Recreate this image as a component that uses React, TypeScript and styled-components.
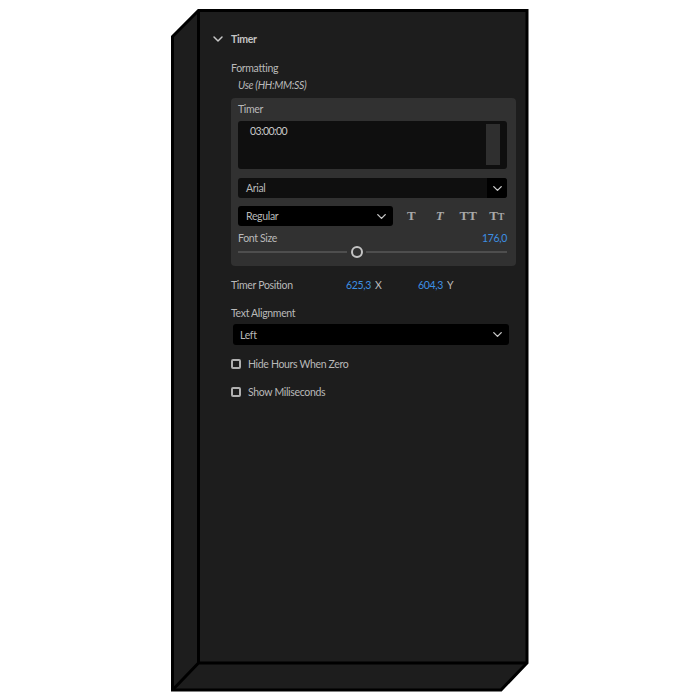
import React from "react";
import styled, { createGlobalStyle } from "styled-components";
import { ChevronDown } from "lucide-react";

const GlobalStyle = createGlobalStyle`
  html, body {
    margin: 0;
    background: #fff;
  }
  body {
    font-family: "Lato", "Open Sans", sans-serif;
  }
`;

const Stage = styled.div`
  position: relative;
  width: 700px;
  height: 700px;
  box-sizing: border-box;
  padding: 10px 172px 36px 198px;
`;

const BoxDrawing = styled.svg`
  position: absolute;
  left: 0;
  top: 0;
`;

const Panel = styled.div`
  position: relative;
  height: 654px;
  box-sizing: border-box;
  padding: 21px 18px 0 15px;
  color: #b9b9b9;
  font-size: 10.5px;
  letter-spacing: -0.33px;
  line-height: 14px;
`;

const Header = styled.div`
  display: flex;
  align-items: center;
  gap: 5px;
  height: 16px;
  margin-left: -3px;
  color: #c4c4c4;
  font-weight: 700;
`;

const Body = styled.div`
  padding-left: 18px;
`;

const Label = styled.div<{ $top?: number }>`
  margin-top: ${(p) => p.$top ?? 0}px;
`;

const Hint = styled.div`
  margin: 3px 0 0 7px;
  font-style: italic;
`;

const Card = styled.div`
  margin-top: 6px;
  width: 285px;
  height: 168px;
  box-sizing: border-box;
  padding: 4px 9px 0 7px;
  background: #313131;
  border-radius: 4px;
`;

const TextArea = styled.div`
  display: flex;
  justify-content: space-between;
  height: 48px;
  margin-top: 5px;
  box-sizing: border-box;
  padding: 3px 7px 4px 12px;
  background: #0f0f0f;
  border-radius: 3px;
  color: #c8c8c8;
  letter-spacing: -0.6px;
`;

const ScrollThumb = styled.div`
  width: 14px;
  background: #2f2f2f;
`;

const FontSelect = styled.div`
  display: flex;
  justify-content: space-between;
  align-items: center;
  height: 20px;
  margin-top: 9px;
  padding-left: 8px;
  background: #0f0f0f;
  border-radius: 3px;
  overflow: hidden;
`;

const SelectButton = styled.div`
  display: flex;
  align-items: center;
  justify-content: center;
  width: 20px;
  height: 20px;
  background: #000;
`;

const StyleRow = styled.div`
  display: flex;
  align-items: center;
  height: 20px;
  margin-top: 8px;
`;

const Dropdown = styled.div<{ $width: number; $height: number; $inset: number }>`
  display: flex;
  flex: none;
  justify-content: space-between;
  align-items: center;
  width: ${(p) => p.$width}px;
  height: ${(p) => p.$height}px;
  box-sizing: border-box;
  padding: 0 4.5px 0 ${(p) => p.$inset}px;
  background: #000;
  border-radius: 3px;
  color: #b9b9b9;
`;

const StyleButtons = styled.div`
  display: flex;
  flex: none;
  padding-left: 4px;
`;

const StyleButton = styled.span<{ $italic?: boolean }>`
  width: 28.5px;
  text-align: center;
  font-family: "Liberation Serif", serif;
  font-size: 13px;
  font-weight: 700;
  font-style: ${(p) => (p.$italic ? "italic" : "normal")};
  letter-spacing: 0;
  color: #a9a9a9;
`;

const SmallCap = styled.span`
  font-size: 9.5px;
`;

const SliderHead = styled.div`
  display: flex;
  justify-content: space-between;
  margin-top: 5px;
`;

const Value = styled.span`
  color: #3d8fe3;
`;

const SliderRow = styled.div`
  display: flex;
  align-items: center;
  height: 14px;
`;

const SliderTrack = styled.div<{ $width: number }>`
  width: ${(p) => p.$width}px;
  height: 2px;
  background: #4e4e4e;
`;

const Knob = styled.div`
  flex: none;
  width: 12px;
  height: 12px;
  margin: 0 3px 0 4px;
  box-sizing: border-box;
  border: 2px solid #c4c4c4;
  border-radius: 50%;
`;

const PositionRow = styled.div`
  display: grid;
  grid-template-columns: 115px 72px 1fr;
  margin-top: 12px;
`;

const Coord = styled.span`
  display: flex;
  gap: 4px;
`;

const AlignSelect = styled.div`
  margin: 4px 0 0 2px;
`;

const CheckRow = styled.div<{ $top: number }>`
  display: flex;
  align-items: center;
  gap: 7px;
  margin-top: ${(p) => p.$top}px;
`;

const CheckBox = styled.span`
  width: 10px;
  height: 10px;
  box-sizing: border-box;
  border: 2px solid #b0b0b0;
  border-radius: 2px;
`;

const Chevron = ({ size = 15 }: { size?: number }) => (
  <ChevronDown size={size} color="#c8c8c8" strokeWidth={2.2} />
);

export default function App() {
  return (
    <>
      <GlobalStyle />
      <Stage>
        <BoxDrawing width={700} height={700} viewBox="0 0 700 700">
          <path
            d="M198.5 10.5H527V663L501 690H172.5V36.5Z"
            fill="#1d1d1d"
            stroke="#000"
            strokeWidth={3}
            strokeLinejoin="miter"
          />
          <path
            d="M198.5 10.5V663H527M198.5 663L172.5 690"
            fill="none"
            stroke="#000"
            strokeWidth={3}
          />
        </BoxDrawing>
        <Panel>
          <Header>
            <Chevron size={16} />
            <span>Timer</span>
          </Header>
          <Body>
            <Label $top={14}>Formatting</Label>
            <Hint>Use (HH:MM:SS)</Hint>
            <Card>
              <Label>Timer</Label>
              <TextArea>
                <span>03:00:00</span>
                <ScrollThumb />
              </TextArea>
              <FontSelect>
                <span>Arial</span>
                <SelectButton>
                  <Chevron />
                </SelectButton>
              </FontSelect>
              <StyleRow>
                <Dropdown $width={155} $height={20} $inset={8}>
                  <span>Regular</span>
                  <Chevron />
                </Dropdown>
                <StyleButtons>
                  <StyleButton>T</StyleButton>
                  <StyleButton $italic>T</StyleButton>
                  <StyleButton>TT</StyleButton>
                  <StyleButton>
                    T<SmallCap>T</SmallCap>
                  </StyleButton>
                </StyleButtons>
              </StyleRow>
              <SliderHead>
                <span>Font Size</span>
                <Value>176,0</Value>
              </SliderHead>
              <SliderRow>
                <SliderTrack $width={109} />
                <Knob />
                <SliderTrack $width={141} />
              </SliderRow>
            </Card>
            <PositionRow>
              <span>Timer Position</span>
              <Coord>
                <Value>625,3</Value> X
              </Coord>
              <Coord>
                <Value>604,3</Value> Y
              </Coord>
            </PositionRow>
            <Label $top={14}>Text Alignment</Label>
            <AlignSelect>
              <Dropdown $width={276} $height={21} $inset={7}>
                <span>Left</span>
                <Chevron />
              </Dropdown>
            </AlignSelect>
            <CheckRow $top={12}>
              <CheckBox />
              <span>Hide Hours When Zero</span>
            </CheckRow>
            <CheckRow $top={14}>
              <CheckBox />
              <span>Show Miliseconds</span>
            </CheckRow>
          </Body>
        </Panel>
      </Stage>
    </>
  );
}
